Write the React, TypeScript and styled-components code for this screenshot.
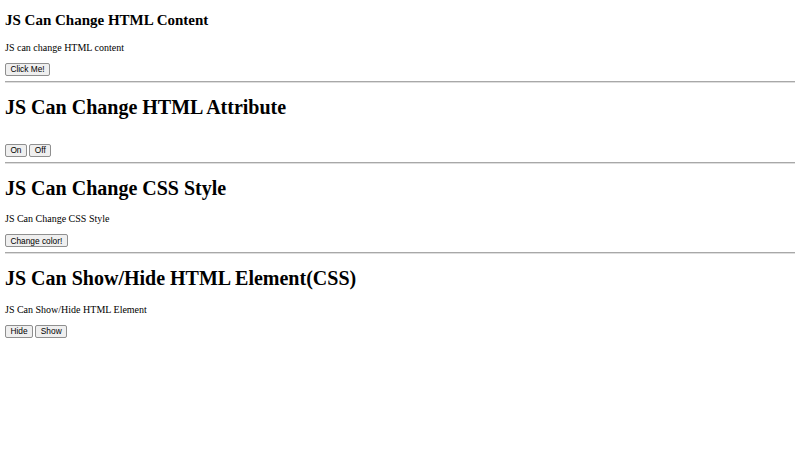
import React from "react";
import styled, { createGlobalStyle } from "styled-components";

const Global = createGlobalStyle`
  html, body { margin: 0; padding: 0; background: #ffffff; }
  body {
    font-family: "Liberation Serif", "Times New Roman", serif;
    font-size: 10px;
    color: #000000;
  }
`;

const Page = styled.div`
  padding: 0 5px;
  display: flow-root;
`;

const Section = styled.section`
  display: block;
`;

const SmallTitle = styled.h2`
  font-size: 15px;
  font-weight: bold;
  margin: 12.45px 0;
  line-height: normal;
`;

const BigTitle = styled.h1`
  font-size: 20px;
  font-weight: bold;
  margin: 13.4px 0;
  line-height: normal;
`;

const Text = styled.p`
  font-size: 10px;
  margin: 10px 0;
  line-height: normal;
`;

const Blank = styled.div`
  height: 11.5px;
`;

const Row = styled.div`
  display: flex;
  gap: 2.5px;
  align-items: center;
`;

const Btn = styled.button`
  font-family: "Liberation Sans", Arial, sans-serif;
  font-size: 8.33px;
  line-height: normal;
  padding: 0.5px 4.4px;
  background: #efefef;
  color: #000000;
  border: 1px solid #8f8f8f;
  border-radius: 2px;
  cursor: pointer;
`;

const Rule = styled.hr`
  margin: 4.7px 0;
  border: 0;
  border-top: 1px solid #a8a8a8;
  border-bottom: 1px solid #dedede;
  height: 0;
`;

export default function App() {
  return (
    <>
      <Global />
      <Page>
        <Section>
          <SmallTitle>JS Can Change HTML Content</SmallTitle>
          <Text>JS can change HTML content</Text>
          <Row>
            <Btn>Click Me!</Btn>
          </Row>
        </Section>
        <Rule />
        <Section>
          <BigTitle>JS Can Change HTML Attribute</BigTitle>
          <Blank />
          <Row>
            <Btn>On</Btn>
            <Btn>Off</Btn>
          </Row>
        </Section>
        <Rule />
        <Section>
          <BigTitle>JS Can Change CSS Style</BigTitle>
          <Text>JS Can Change CSS Style</Text>
          <Row>
            <Btn>Change color!</Btn>
          </Row>
        </Section>
        <Rule />
        <Section>
          <BigTitle>JS Can Show/Hide HTML Element(CSS)</BigTitle>
          <Text>JS Can Show/Hide HTML Element</Text>
          <Row>
            <Btn>Hide</Btn>
            <Btn>Show</Btn>
          </Row>
        </Section>
      </Page>
    </>
  );
}
